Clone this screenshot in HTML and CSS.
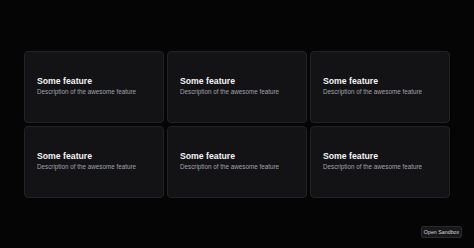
FILE: index.html
```html
<!DOCTYPE html>
<html>
<head>
<meta charset="utf-8">
<link rel="stylesheet" href="styles.css">
</head>
<body>
<main class="page">
  <section class="grid">
    <div class="card"><h3 class="title">Some feature</h3><p class="desc">Description of the awesome feature</p></div>
    <div class="card"><h3 class="title">Some feature</h3><p class="desc">Description of the awesome feature</p></div>
    <div class="card"><h3 class="title">Some feature</h3><p class="desc">Description of the awesome feature</p></div>
    <div class="card"><h3 class="title">Some feature</h3><p class="desc">Description of the awesome feature</p></div>
    <div class="card"><h3 class="title">Some feature</h3><p class="desc">Description of the awesome feature</p></div>
    <div class="card"><h3 class="title">Some feature</h3><p class="desc">Description of the awesome feature</p></div>
  </section>
</main>
<button class="sandbox">Open Sandbox</button>
</body>
</html>
```
FILE: styles.css
```css
html, body {
  margin: 0;
  padding: 0;
  background: #050505;
  font-family: "Liberation Sans", Arial, sans-serif;
}
.page {
  height: 248px;
  display: flex;
  align-items: center;
  justify-content: center;
  padding: 0 24px;
  box-sizing: border-box;
}
.grid {
  width: 426px;
  display: grid;
  grid-template-columns: repeat(3, 1fr);
  grid-auto-rows: 72px;
  gap: 3px;
}
.card {
  background: #131315;
  border: 1px solid #222226;
  border-radius: 4px;
  padding: 0 12px;
  display: flex;
  flex-direction: column;
  justify-content: center;
  box-sizing: border-box;
}
.title {
  margin: 0;
  color: #f4f4f5;
  font-size: 8.7px;
  font-weight: 700;
  line-height: 10px;
  margin-top: -1px;
}
.desc {
  margin: 2px 0 0;
  color: #a1a1aa;
  font-size: 6.3px;
  line-height: 8px;
}
.sandbox {
  position: fixed;
  right: 12px;
  bottom: 10px;
  width: 41px;
  height: 12px;
  padding: 0;
  background: #18181a;
  border: 1px solid #2a2a2e;
  border-radius: 2px;
  color: #d4d4d8;
  font-family: "Liberation Sans", Arial, sans-serif;
  font-size: 5.3px;
  line-height: 10px;
}
```
